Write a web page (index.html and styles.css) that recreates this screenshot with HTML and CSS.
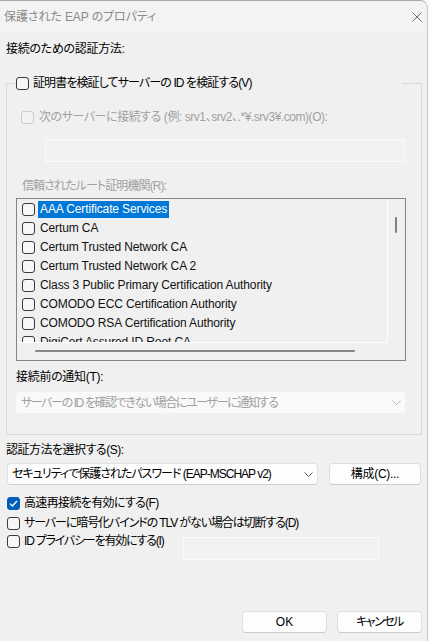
FILE: index.html
```html
<!DOCTYPE html>
<html lang="ja">
<head>
<meta charset="utf-8">
<title>保護された EAP のプロパティ</title>
<link rel="stylesheet" href="styles.css">
</head>
<body>
<div class="window">
  <div class="titlebar">
    <span class="title">保護された EAP のプロパティ</span>
    <svg class="close" width="10" height="10" viewBox="0 0 10 10"><path d="M0.5 0.5 L9.5 9.5 M9.5 0.5 L0.5 9.5" stroke="#6e6e6e" stroke-width="1" fill="none"/></svg>
  </div>
  <div class="content">
    <div class="heading">接続のための認証方法:</div>
    <div class="group">
      <div class="legend"><span class="cb"></span><span class="cb-text legend-text">証明書を検証してサーバーの ID を検証する(V)</span></div>
      <div class="row srv-row dim"><span class="cb cb-dis"></span><span class="cb-text srv-text">次のサーバーに接続する (例: srv1、srv2、.*¥.srv3¥.com)(O):</span></div>
      <div class="textbox srv-box"></div>
      <div class="label dim trusted-label">信頼されたルート証明機関(R):</div>
      <div class="listbox">
        <div class="list-content">
          <div class="item"><span class="cb"></span><span class="item-text selected">AAA Certificate Services</span></div>
          <div class="item"><span class="cb"></span><span class="item-text">Certum CA</span></div>
          <div class="item"><span class="cb"></span><span class="item-text">Certum Trusted Network CA</span></div>
          <div class="item"><span class="cb"></span><span class="item-text">Certum Trusted Network CA 2</span></div>
          <div class="item"><span class="cb"></span><span class="item-text">Class 3 Public Primary Certification Authority</span></div>
          <div class="item"><span class="cb"></span><span class="item-text">COMODO ECC Certification Authority</span></div>
          <div class="item"><span class="cb"></span><span class="item-text">COMODO RSA Certification Authority</span></div>
          <div class="item"><span class="cb"></span><span class="item-text">DigiCert Assured ID Root CA</span></div>
        </div>
        <div class="vscroll"><span class="vthumb"></span></div>
        <div class="hscroll"><span class="hthumb"></span></div>
        <div class="corner"></div>
      </div>
      <div class="label notify-label">接続前の通知(T):</div>
      <div class="select select-dis">
        <span class="select-text notify-text">サーバーの ID を確認できない場合にユーザーに通知する</span>
        <svg class="chev" width="9" height="5" viewBox="0 0 9 5"><path d="M0.5 0.5 L4.5 4.5 L8.5 0.5" stroke="#b8b8b8" stroke-width="1" fill="none"/></svg>
      </div>
    </div>
    <div class="label method-label">認証方法を選択する(S):</div>
    <div class="method-row">
      <div class="select select-on">
        <span class="select-text method-text">セキュリティで保護されたパスワード (EAP-MSCHAP v2)</span>
        <svg class="chev" width="9" height="5" viewBox="0 0 9 5"><path d="M0.5 0.5 L4.5 4.5 L8.5 0.5" stroke="#5a5a5a" stroke-width="1" fill="none"/></svg>
      </div>
      <div class="button config-btn">構成(C)...</div>
    </div>
    <div class="row check-row first-check"><span class="cb cb-on"><svg width="9" height="7" viewBox="0 0 9 7"><path d="M1 3.6 L3.4 6 L8 1" stroke="#fff" stroke-width="1.3" fill="none"/></svg></span><span class="cb-text fast-text">高速再接続を有効にする(F)</span></div>
    <div class="row check-row second-check"><span class="cb"></span><span class="cb-text tlv-text">サーバーに暗号化バインドの TLV がない場合は切断する(D)</span></div>
    <div class="privacy-row">
      <div class="row check-row privacy-label"><span class="cb"></span><span class="cb-text privacy-text">ID プライバシーを有効にする(I)</span></div>
      <div class="textbox privacy-box"></div>
    </div>
    <div class="buttons">
      <div class="button dlg-btn">OK</div>
      <div class="button dlg-btn cancel-btn">キャンセル</div>
    </div>
  </div>
</div>
</body>
</html>
```

FILE: styles.css
```css
* { box-sizing: border-box; }
html, body { margin: 0; padding: 0; }
body {
  background: #fbfbfb;
  font-family: "Liberation Sans", "Noto Sans CJK JP", sans-serif;
  font-size: 12px;
  line-height: 16px;
  color: #000;
  font-feature-settings: "palt";
  overflow: hidden;
}
.window {
  width: 428px;
  height: 641px;
  background: #f0f0f0;
  border-top: 1px solid #a8a8a8;
  border-right: 1px solid #c8c8c8;
  border-top-right-radius: 8px;
  overflow: hidden;
}
.titlebar {
  height: 31px;
  background: #f3f3f3;
  display: flex;
  align-items: center;
  justify-content: space-between;
  padding: 0 5px 0 4px;
}
.title { color: #8a8a8a; letter-spacing: -0.1px; }
.close { display: block; }
.content {
  padding: 9px 5px 0 6px;
}
.heading { height: 16px; letter-spacing: -0.3px; }
.dim { color: #a0a0a0; }

.group {
  margin-top: 26px;
  border: 1px solid #d9d9d9;
  padding: 0 15px 21px 9px;
}
.legend {
  margin: -9px 0 0 -1px;
  width: 387px;
  height: 16px;
  background: #f0f0f0;
  display: flex;
  align-items: center;
  padding-left: 1px;
}
.legend-text { letter-spacing: -0.9px; }
.row {
  display: flex;
  align-items: center;
  height: 16px;
}
.cb {
  width: 13px;
  height: 13px;
  flex: none;
  border: 1px solid #3a3a3a;
  border-radius: 3px;
  background: #f7f7f7;
  display: flex;
  align-items: center;
  justify-content: center;
}
.cb-dis { border-color: #cacaca; background: #f3f3f3; }
.cb-on { border-color: #005fb8; background: #005fb8; }
.cb-text { margin-left: 4px; white-space: nowrap; }
.srv-row { margin: 18px 0 0 5px; }
.srv-row .cb-text { margin-left: 5px; }
.srv-text { letter-spacing: -0.45px; }
.textbox {
  border: 1px solid #fafafa;
  background: #f2f2f2;
  height: 23px;
}
.srv-box { margin: 14px 1px 0 29px; }
.label { height: 16px; }
.trusted-label { margin: 16px 0 0 6px; letter-spacing: -0.9px; }

.listbox {
  margin-top: 4px;
  height: 163px;
  border: 1px solid #82868c;
  display: grid;
  grid-template-columns: 1fr 17px;
  grid-template-rows: 1fr 17px;
}
.list-content {
  border-right: 1px solid #ffffff;
  border-bottom: 1px solid #ffffff;
  overflow: hidden;
  padding: 1px 0 0 5px;
}
.item {
  height: 19px;
  display: flex;
  align-items: center;
}
.item-text {
  margin-left: 3px;
  padding: 0 2px;
  line-height: 17px;
  white-space: nowrap;
  letter-spacing: -0.12px;
  color: #111;
}
.item-text.selected { background: #0078d7; color: #fff; }
.vthumb {
  display: block;
  margin: 18px 0 0 7px;
  width: 2px;
  height: 16px;
  border-radius: 1px;
  background: #808080;
}
.hscroll { padding: 7px 0 0 18px; }
.hthumb {
  display: block;
  width: 320px;
  height: 2px;
  border-radius: 1px;
  background: #868686;
}
.notify-label { margin-top: 8px; letter-spacing: -0.3px; }
.select {
  display: flex;
  align-items: center;
  justify-content: space-between;
  white-space: nowrap;
}
.select-dis {
  margin: 7px 1px 0 0;
  height: 21px;
  background: #f9f9f9;
  border-radius: 3px;
  padding: 0 4px 0 5px;
  color: #a0a0a0;
}
.notify-text { letter-spacing: -1.4px; }
.method-label { margin-top: 7px; letter-spacing: -0.5px; }
.method-row {
  margin-top: 5px;
  display: flex;
  gap: 11px;
  padding-left: 1px;
}
.select-on {
  width: 311px;
  height: 22px;
  background: #fdfdfd;
  border: 1px solid #e2e2e2;
  border-bottom-color: #cdcdcd;
  border-radius: 4px;
  padding: 0 4px 0 4px;
}
.method-text { letter-spacing: -1px; }
.button {
  height: 22px;
  background: #fdfdfd;
  border: 1px solid #dedede;
  border-bottom-color: #cacaca;
  border-radius: 4px;
  display: flex;
  align-items: center;
  justify-content: center;
}
.config-btn { width: 92px; letter-spacing: -0.3px; }
.check-row { padding-left: 1px; }
.first-check { margin-top: 10px; }
.fast-text { letter-spacing: -0.65px; }
.second-check { margin-top: 4px; }
.tlv-text { letter-spacing: -1.1px; }
.privacy-row {
  margin-top: 2px;
  display: flex;
  align-items: flex-start;
}
.privacy-label { width: 177px; }
.privacy-text { letter-spacing: -1.2px; }
.privacy-box {
  margin-top: 4px;
  width: 196px;
}
.buttons {
  margin-top: 51px;
  display: flex;
  justify-content: flex-end;
  gap: 10px;
}
.dlg-btn { width: 85px; }
.cancel-btn { letter-spacing: -1.5px; }
```
